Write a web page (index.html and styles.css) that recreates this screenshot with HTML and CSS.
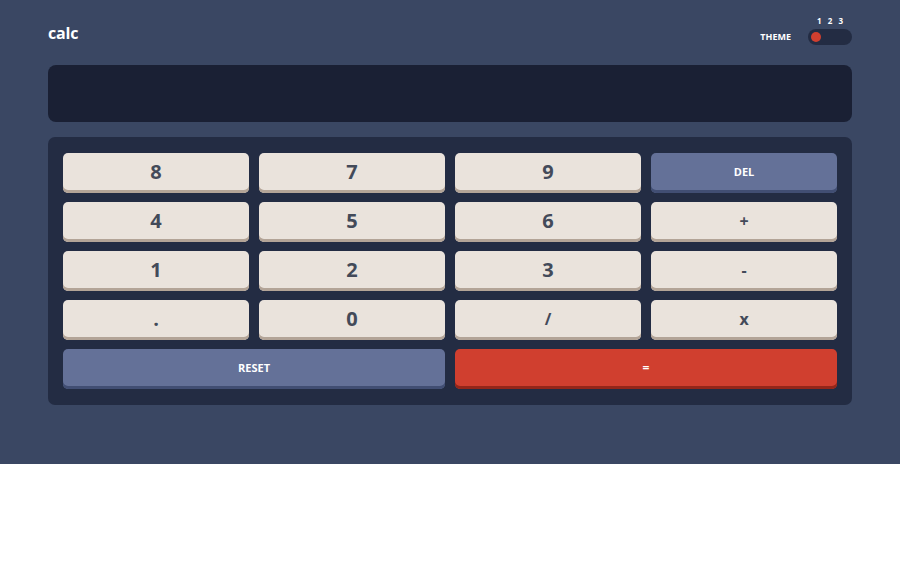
FILE: index.html
```html
<!DOCTYPE html>
<html lang="en">
<head>
<meta charset="utf-8">
<title>calc</title>
<link rel="stylesheet" href="styles.css">
</head>
<body>
<main class="page">
  <header class="header">
    <h1 class="logo">calc</h1>
    <div class="theme">
      <span class="theme-label">THEME</span>
      <div class="theme-switch">
        <div class="theme-nums"><span>1</span><span>2</span><span>3</span></div>
        <div class="toggle"><span class="toggle-dot"></span></div>
      </div>
    </div>
  </header>
  <section class="screen"></section>
  <section class="keypad">
    <button class="key">8</button>
    <button class="key">7</button>
    <button class="key">9</button>
    <button class="key key-blue">DEL</button>
    <button class="key">4</button>
    <button class="key">5</button>
    <button class="key">6</button>
    <button class="key key-op">+</button>
    <button class="key">1</button>
    <button class="key">2</button>
    <button class="key">3</button>
    <button class="key key-op">-</button>
    <button class="key">.</button>
    <button class="key">0</button>
    <button class="key key-op">/</button>
    <button class="key key-op">x</button>
    <button class="key key-blue key-wide">RESET</button>
    <button class="key key-red key-wide">=</button>
  </section>
</main>
</body>
</html>
```

FILE: styles.css
```css
html {
  background: #ffffff;
}
body {
  margin: 0;
  font-family: "Open Sans", "DejaVu Sans", sans-serif;
}
.page {
  box-sizing: border-box;
  height: 464px;
  background: #3a4763;
  padding: 0 48px;
}
.header {
  display: flex;
  justify-content: space-between;
  align-items: flex-end;
  padding-top: 17px;
}
.logo {
  margin: 0 0 4px 0;
  font-size: 16px;
  line-height: 16px;
  font-weight: 700;
  color: #ffffff;
  letter-spacing: -0.2px;
}
.theme {
  display: flex;
  align-items: flex-end;
  gap: 17px;
}
.theme-label {
  font-size: 9px;
  line-height: 9px;
  font-weight: 700;
  color: #ffffff;
  margin-bottom: 4px;
}
.theme-switch {
  display: flex;
  flex-direction: column;
  gap: 4px;
  width: 44px;
}
.theme-nums {
  display: flex;
  justify-content: space-between;
  padding: 0 9px 0 9px;
  font-size: 8px;
  line-height: 8px;
  font-weight: 700;
  color: #ffffff;
}
.toggle {
  box-sizing: border-box;
  height: 16px;
  border-radius: 8px;
  background: #232c43;
  padding: 3px;
  display: flex;
  align-items: center;
}
.toggle-dot {
  width: 10px;
  height: 10px;
  border-radius: 50%;
  background: #d03f2f;
}
.screen {
  margin-top: 20px;
  height: 57px;
  border-radius: 8px;
  background: #1a2034;
}
.keypad {
  margin-top: 15px;
  background: #232c43;
  border-radius: 7px;
  padding: 16px 15px;
  display: grid;
  grid-template-columns: repeat(4, 1fr);
  grid-auto-rows: 40px;
  column-gap: 10px;
  row-gap: 9px;
}
.key {
  box-sizing: border-box;
  border: none;
  margin: 0;
  padding: 0 0 3px 0;
  border-radius: 5px;
  background: #eae3dc;
  box-shadow: inset 0 -3px 0 #b3a497;
  color: #434a59;
  font-family: "Open Sans", "DejaVu Sans", sans-serif;
  font-weight: 700;
  font-size: 20px;
  line-height: 1;
  display: flex;
  align-items: center;
  justify-content: center;
}
.key-op {
  font-size: 16px;
}
.key-blue {
  background: #647198;
  box-shadow: inset 0 -3px 0 #414e73;
  color: #ffffff;
  font-size: 11px;
}
.key-red {
  background: #d03f2f;
  box-shadow: inset 0 -3px 0 #93261a;
  color: #ffffff;
  font-size: 12px;
}
.key-wide {
  grid-column: span 2;
}
```
